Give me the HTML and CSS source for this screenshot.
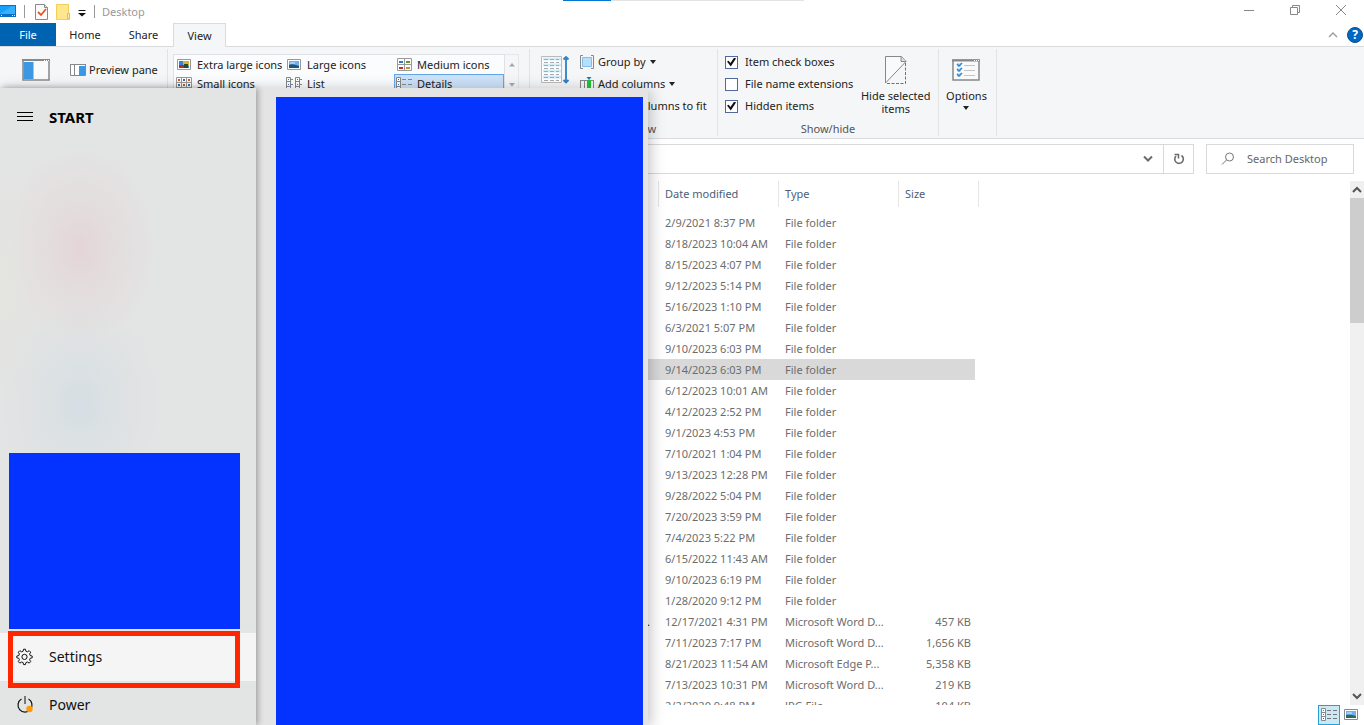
FILE: index.html
```html
<!DOCTYPE html>
<html lang="en">
<head>
<meta charset="utf-8">
<title>Desktop</title>
<link rel="stylesheet" href="styles.css">
</head>
<body>
<div class="window">
  <header class="titlebar">
    <div class="quick">
      <svg width="16" height="23" viewBox="0 0 16 23"><rect y="5" width="16" height="12" fill="#0a6fc2"/><path d="M0 6h15v8H0z" fill="#16a0fb"/><path d="M0 14 12 6h3v8z" fill="#35b0ff"/><path d="M1 15.500h1M12 15.500h1M14 15.500h1" stroke="#fff"/></svg>
      <i class="bar"></i>
      <svg width="13" height="23" viewBox="0 0 13 23"><path d="M.5 4.500h9l3 3v12H.5z" fill="#fafafa" stroke="#8a8a8a"/><path d="M9.500 4.500v3h3" fill="#ddd" stroke="#8a8a8a"/><path d="m3 12 3 3 5-6" fill="none" stroke="#e8551c" stroke-width="1.800"/></svg>
      <svg width="14" height="23" viewBox="0 0 14 23"><path d="M.5 4.500h12v9h1v6H.5z" fill="#ffe68f" stroke="#f4cf57"/><path d="M11.500 13.500h2v5h-2z" fill="#fff0b5" stroke="#e7bd41"/></svg>
      <svg width="8" height="23" viewBox="0 0 8 23"><path d="M.5 10.500h7" stroke="#111"/><path d="M0 13h8L4 16.500z" fill="#111"/></svg>
      <i class="bar"></i>
      <span class="title">Desktop</span>
    </div>
    <div class="progress"><i></i></div>
    <div class="caption">
      <button aria-label="Minimize"><svg width="12" height="12"><path d="M1 6.500h10" stroke="#888"/></svg></button>
      <button aria-label="Restore"><svg width="12" height="12"><path d="M1.500 3.500h7v7h-7zM3.500 3V1.500h7v7H9" fill="none" stroke="#888"/></svg></button>
      <button aria-label="Close"><svg width="12" height="12"><path d="m1 1 10 10M11 1 1 11" stroke="#888"/></svg></button>
    </div>
  </header>

  <nav class="tabs">
    <button class="tab file">File</button>
    <button class="tab home">Home</button>
    <button class="tab share">Share</button>
    <button class="tab view">View</button>
    <div class="tabs-end">
      <svg width="10" height="8"><path d="m1 6 4-4 4 4" fill="none" stroke="#999" stroke-width="1.300"/></svg>
      <button class="help" aria-label="Help">?</button>
    </div>
  </nav>

  <section class="ribbon">
    <div class="group panes">
      <svg width="28" height="22" viewBox="0 0 28 22"><path d="M1 1h26v20H1z" fill="#fafafa" stroke="#888" stroke-width="1.500"/><path d="M1.500 3h10v17h-10z" fill="#3d98e3"/><path d="M0 1h28" stroke="#888" stroke-width="2"/><path d="M22 1.500h1M24 1.500h1M26 1.500h1" stroke="#fff"/></svg>
      <button class="cmd"><svg width="16" height="12" viewBox="0 0 16 12"><path d="M.5.500h15v11H.5zM4.500 1v10" fill="#fff" stroke="#888"/><path d="M9 2h6v9H9z" fill="#3d98e3"/><path d="M0 .5h16" stroke="#888"/></svg>Preview pane</button>
    </div>
    <div class="group layout">
      <div class="gallery">
        <button><svg width="16" height="14" viewBox="0 0 16 14"><path d="M1.500 1.500h13v10h-13z" fill="#fff" stroke="#999"/><path d="M3 3h10v7H3z" fill="#3f7fd2"/><path d="M7 3h6v5H7z" fill="#d4b72b"/><path d="M3 7h5v3H3z" fill="#a6362b"/><path d="M8 6h4v4H8z" fill="#284a2a"/></svg>Extra large icons</button>
        <button><svg width="16" height="14" viewBox="0 0 16 14"><path d="M1.500 1.500h13v10h-13z" fill="#fff" stroke="#999"/><path d="M3 3h10v7H3z" fill="#70aef0"/><path d="M3 7q3-2 10 1v2H3z" fill="#1d5775"/><path d="M4 5h5" stroke="#d9ecff"/></svg>Large icons</button>
        <button><svg width="16" height="14" viewBox="0 0 16 14"><path d="M1.500.500h14v12h-14zM8.500.500v12M1.500 6.500h14" fill="#fff" stroke="#999"/><path d="M3 3h4v2H3z" fill="#3879b9"/><path d="M10 3h4v2h-4z" fill="#668e34"/><path d="M3 9h4v2H3z" fill="#c43122"/><path d="M10 9h4v2h-4z" fill="#b99b28"/></svg>Medium icons</button>
        <button><svg width="16" height="14" viewBox="0 0 16 14"><path d="M.5.500h15v13H.5zM5.500.500v13M10.500.500v13M0 5.500h16M0 10.500h16" fill="#fff" stroke="#999"/><path d="M2 3h2M12 3h2M7 8h2" stroke="#c45a28" stroke-width="2"/><path d="M7 3h2M2 8h2M12 8h2" stroke="#3679a0" stroke-width="2"/></svg>Small icons</button>
        <button><svg width="16" height="14" viewBox="0 0 16 14"><path d="M.5.500h4v13h-4zM9.500.500h4v13h-4zM.5 4.500h4M.5 9.500h4M9.500 4.500h4M9.500 9.500h4M5 2.500h2M5 7.500h2M5 11.500h2M14 2.500h2M14 7.500h2M14 11.500h2" fill="#fff" stroke="#888"/><path d="M2 2.500h1M11 2.500h1" stroke="#26a04c"/><path d="M2 7.500h1M11 7.500h1" stroke="#3478e8"/><path d="M2 11.500h1M11 11.500h1" stroke="#d22"/></svg>List</button>
        <button class="chosen"><svg width="16" height="14" viewBox="0 0 16 14"><path d="M.5.500h4v13h-4zM.5 4.500h4M.5 9.500h4M6 2.500h4M12 2.500h4M6 7.500h4M12 7.500h4M6 11.500h4M12 11.500h4" fill="#fff" stroke="#888"/><path d="M2 2.500h1" stroke="#26a04c"/><path d="M2 7.500h1" stroke="#3478e8"/><path d="M2 11.500h1" stroke="#d22"/></svg>Details</button>
      </div>
      <div class="gallery-scroll"><svg width="6" height="4"><path d="M0 3.500 3 0l3 3.500z" fill="#a4a8ad"/></svg><svg width="6" height="4"><path d="M0 0h6L3 3.500z" fill="#a4a8ad"/></svg></div>
    </div>
    <div class="group current">
      <div class="group-body">
        <svg class="sort" width="29" height="28" viewBox="0 0 29 28"><path d="M.5.500h20v26H.5z" fill="#fff" stroke="#bbb"/><path d="M2 3h18M2 9h18M2 15h18M2 21h18" stroke="#d3ebf6" stroke-width="3"/><path d="M3 3.500h15M3 6.500h15M3 9.500h15M3 12.500h15M3 15.500h15M3 18.500h15M3 21.500h15M3 24.500h15" stroke="#aaa" stroke-dasharray="4 2"/><path d="M25 2v24M22.500 3.500 25 1l2.500 2.500M22.500 24l2.500 2.500 2.500-2.500" fill="none" stroke="#2f7fc4" stroke-width="1.800"/></svg>
        <div class="stack">
          <button class="cmd"><svg width="14" height="14" viewBox="0 0 14 14"><path d="M3 .5H.5v13H3M11 .5h2.500v13H11" fill="none" stroke="#888"/><path d="M2.500 2.500h9v9h-9z" fill="#b4e0fd" stroke="#84bfe8"/></svg>Group by<b class="caret"></b></button>
          <button class="cmd"><svg width="14" height="14" viewBox="0 0 14 14"><path d="M0 3.500h14M.5 3v11M4.500 3v11M13.500 3v11" stroke="#888"/><path d="M7 3h4v11H7z" fill="#24c336"/><path d="M6.500 0h5L9 3z" fill="#1678c8"/></svg>Add columns<b class="caret"></b></button>
          <button class="cmd"><svg width="14" height="14"></svg>Size all columns to fit</button>
        </div>
      </div>
      <div class="caption-text">Current view</div>
    </div>
    <div class="group showhide">
      <div class="group-body">
        <div class="stack">
          <label><input type="checkbox" checked>Item check boxes</label>
          <label><input type="checkbox">File name extensions</label>
          <label><input type="checkbox" checked>Hidden items</label>
        </div>
        <button class="big"><svg width="24" height="30" viewBox="0 0 24 30"><path d="M1.500 28V1.500h16l4.500 5L1.500 28" fill="#fafafa" stroke="#888"/><path d="M17 1.500v5h5" fill="#ddd" stroke="#888"/><path d="M21.500 8v20.500H2" fill="none" stroke="#1d86df" stroke-dasharray="3 1.500"/></svg><span>Hide selected<br>items</span></button>
      </div>
      <div class="caption-text">Show/hide</div>
    </div>
    <div class="group options">
      <button class="big"><svg width="28" height="30" viewBox="0 0 28 30"><path d="M1 5h26v20H1z" fill="#fafafa" stroke="#888" stroke-width="1.500"/><path d="M0 5.500h28" stroke="#888" stroke-width="2"/><path d="M22 5.500h1M24 5.500h1M26 5.500h1" stroke="#fff"/><path d="M5 8h4v4H5zM5 13h4v4H5zM5 18h4v4H5z" fill="#cde3f4"/><path d="m5 9 2 2 3-3M5 14l2 2 3-3M5 19l2 2 3-3" fill="none" stroke="#2586d5" stroke-width="1.500"/><path d="M12 10.500h11M12 15.500h11M12 20.500h11" stroke="#c4c4c4"/></svg><span>Options</span><b class="caret"></b></button>
    </div>
  </section>

  <section class="address">
    <div class="path">
      <button aria-label="Previous locations"><svg width="10" height="8"><path d="m1 1.500 4 4 4-4" fill="none" stroke="#6b6b6b" stroke-width="2"/></svg></button>
      <button class="refresh" aria-label="Refresh"><svg width="12" height="12" viewBox="0 0 12 12"><path d="M8.500 2.500A4.300 4.300 0 1 1 3 3" fill="none" stroke="#6b6b6b" stroke-width="1.600"/><path d="M1.500 1.500h4v4" fill="none" stroke="#6b6b6b" stroke-width="1.500"/></svg></button>
    </div>
    <label class="search"><svg width="14" height="14" viewBox="0 0 14 14"><circle cx="8.500" cy="5" r="4" fill="none" stroke="#777"/><path d="M5.500 8 1 12.500" stroke="#777"/></svg><input type="text" placeholder="Search Desktop" aria-label="Search Desktop"></label>
  </section>

  <main class="content">
    <div class="list">
      <table>
        <colgroup><col class="c-name"><col class="c-date"><col class="c-type"><col class="c-size"></colgroup>
        <thead><tr><th></th><th>Date modified</th><th>Type</th><th>Size</th></tr></thead>
        <tbody>
          <tr><td></td><td>2/9/2021 8:37 PM</td><td>File folder</td><td></td></tr>
          <tr><td></td><td>8/18/2023 10:04 AM</td><td>File folder</td><td></td></tr>
          <tr><td></td><td>8/15/2023 4:07 PM</td><td>File folder</td><td></td></tr>
          <tr><td></td><td>9/12/2023 5:14 PM</td><td>File folder</td><td></td></tr>
          <tr><td></td><td>5/16/2023 1:10 PM</td><td>File folder</td><td></td></tr>
          <tr><td></td><td>6/3/2021 5:07 PM</td><td>File folder</td><td></td></tr>
          <tr><td></td><td>9/10/2023 6:03 PM</td><td>File folder</td><td></td></tr>
          <tr class="selected"><td></td><td>9/14/2023 6:03 PM</td><td>File folder</td><td></td></tr>
          <tr><td></td><td>6/12/2023 10:01 AM</td><td>File folder</td><td></td></tr>
          <tr><td></td><td>4/12/2023 2:52 PM</td><td>File folder</td><td></td></tr>
          <tr><td></td><td>9/1/2023 4:53 PM</td><td>File folder</td><td></td></tr>
          <tr><td></td><td>7/10/2021 1:04 PM</td><td>File folder</td><td></td></tr>
          <tr><td></td><td>9/13/2023 12:28 PM</td><td>File folder</td><td></td></tr>
          <tr><td></td><td>9/28/2022 5:04 PM</td><td>File folder</td><td></td></tr>
          <tr><td></td><td>7/20/2023 3:59 PM</td><td>File folder</td><td></td></tr>
          <tr><td></td><td>7/4/2023 5:22 PM</td><td>File folder</td><td></td></tr>
          <tr><td></td><td>6/15/2022 11:43 AM</td><td>File folder</td><td></td></tr>
          <tr><td></td><td>9/10/2023 6:19 PM</td><td>File folder</td><td></td></tr>
          <tr><td></td><td>1/28/2020 9:12 PM</td><td>File folder</td><td></td></tr>
          <tr><td>.</td><td>12/17/2021 4:31 PM</td><td>Microsoft Word D...</td><td>457 KB</td></tr>
          <tr><td></td><td>7/11/2023 7:17 PM</td><td>Microsoft Word D...</td><td>1,656 KB</td></tr>
          <tr><td></td><td>8/21/2023 11:54 AM</td><td>Microsoft Edge P...</td><td>5,358 KB</td></tr>
          <tr><td></td><td>7/13/2023 10:31 PM</td><td>Microsoft Word D...</td><td>219 KB</td></tr>
          <tr><td></td><td>2/2/2020 9:48 PM</td><td>JPG File</td><td>104 KB</td></tr>
        </tbody>
      </table>
    </div>
    <div class="scrollbar">
      <svg width="10" height="8"><path d="m1 6 4-4 4 4" fill="none" stroke="#555" stroke-width="2"/></svg>
      <i class="thumb"></i>
      <svg class="down" width="10" height="8"><path d="m1 2 4 4 4-4" fill="none" stroke="#555" stroke-width="2"/></svg>
    </div>
  </main>

  <footer class="status">
    <button class="on" aria-label="Details view"><svg width="16" height="14" viewBox="0 0 16 14"><path d="M.5.500h4v12h-4zM.5 4.500h4M.5 8.500h4" fill="#fff" stroke="#888"/><path d="M6 2.500h4M12 2.500h4M6 6.500h4M12 6.500h4M6 10.500h4M12 10.500h4" stroke="#777"/><path d="M2 2.500h1" stroke="#26a04c"/><path d="M2 6.500h1" stroke="#3478e8"/><path d="M2 10.500h1" stroke="#d22"/></svg></button>
    <button aria-label="Thumbnail view"><svg width="14" height="12" viewBox="0 0 14 12"><path d="M.5.500h13v10H.5z" fill="#fff" stroke="#888"/><path d="M2 2h10v7H2z" fill="#70aef0"/><path d="M2 6q4-1 10 1v2H2z" fill="#2d6a58"/><path d="M3 4h5" stroke="#d9ecff"/></svg></button>
  </footer>
</div>

<aside class="start">
  <div class="rail">
    <div class="rail-item head"><svg width="16" height="16"><path d="M0 3.500h16M0 7.500h16M0 11.500h16" stroke="#000"/></svg>START</div>
    <div class="cover small"></div>
    <button class="rail-item settings"><svg width="18" height="18" viewBox="0 0 18 18"><path d="M7.600 1.200h1.800l.5 2 1.500.6L13.200 2.700l1.500 1.500-1.100 1.800.6 1.500 2 .5v1.800l-2 .5-.6 1.500 1.100 1.800-1.500 1.500-1.800-1.100-1.500.6-.5 2H7.600l-.5-2-1.500-.6-1.800 1.100-1.500-1.500 1.100-1.800-.6-1.500-2-.5V8l2-.5.6-1.500-1.100-1.800 1.500-1.500 1.800 1.100 1.500-.6z" fill="none" stroke="#111"/><circle r="2.600" cx="8.500" cy="8.900" fill="none" stroke="#111"/></svg>Settings</button>
    <button class="rail-item power"><svg width="18" height="18" viewBox="0 0 18 18"><path d="M5.500 3A7 7 0 1 0 12.500 3" fill="none" stroke="#111" stroke-width="1.200"/><path d="M9 0v8" stroke="#555" stroke-width="1.500"/><circle cx="13.500" cy="13" r="3.200" fill="#ff9a00"/></svg>Power</button>
  </div>
  <div class="tiles"><div class="cover"></div></div>
</aside>
<div class="highlight"></div>
</body>
</html>
```
FILE: styles.css
```css
* { box-sizing: border-box; }
body { margin: 0; height: 100vh; overflow: hidden; position: relative; background: #fff; color: #222; font: 11px/16px "Noto Sans", "Open Sans", sans-serif; }
button, input { font: inherit; color: inherit; }
button { border: 0; padding: 0; background: none; }
svg { display: block; flex: none; }

.window { height: 100%; display: flex; flex-direction: column; }

.titlebar { height: 23px; flex: none; display: flex; justify-content: space-between; position: relative; }
.quick { display: flex; align-items: center; gap: 8px; }
.quick .bar { width: 1px; height: 13px; background: #999; }
.quick .bar + svg { margin-left: 2px; }
.quick .bar + .title { color: #999; margin-left: -1px; }
.progress { position: absolute; top: 0; left: 563px; width: 241px; height: 1px; background: #e3e3e3; }
.progress i { display: block; width: 48px; height: 1px; background: #0078d4; }
.caption { display: flex; }
.caption button { width: 46px; display: flex; justify-content: center; padding-top: 4px; }

.tabs { height: 24px; flex: none; display: flex; border-bottom: 1px solid #dadbdc; }
.tab { height: 24px; text-align: center; }
.file { width: 56px; height: 23px; background: #0063b1; color: #fff; }
.home { width: 58px; }
.share { width: 59px; }
.view { width: 53px; background: #f5f6f7; border: 1px solid #dadbdc; border-bottom: 0; }
.tabs-end { margin-left: auto; display: flex; align-items: center; gap: 9px; }
.help { width: 16px; height: 16px; margin-right: 1px; border: 1px solid #0b4f8f; border-radius: 50%; background: #0067c5; color: #fff; font-weight: bold; font-size: 12px; line-height: 14px; }

.ribbon { height: 92px; flex: none; display: flex; background: #f5f6f7; border-bottom: 1px solid #dadbdc; padding: 2px 0; }
.group { border-right: 1px solid #e2e3e4; height: 87px; flex: none; }
.cmd { display: flex; align-items: center; white-space: nowrap; height: 22px; gap: 4px; }
.panes { width: 168px; display: flex; align-items: flex-start; gap: 20px; padding: 10px 0 0 22px; }
.panes .cmd { gap: 3px; }
.layout { width: 362px; display: flex; align-items: flex-start; padding: 5px 10px 0 5px; }
.gallery { flex: 1; display: grid; grid-template-columns: 110px 110px 110px; grid-template-rows: 19px 20px; background: #fbfcfd; border: 1px solid #dfe1e4; height: 60px; overflow: hidden; }
.gallery button { display: flex; align-items: center; gap: 5px; padding-left: 1px; padding-bottom: 1px; white-space: nowrap; border: 1px solid transparent; height: 20px; }
.gallery .chosen { background: #cce2f9; border-color: #65a6e8; }
.gallery-scroll { width: 14px; height: 60px; border: 1px solid #e6e7e9; border-left: 0; display: flex; flex-direction: column; align-items: center; gap: 16px; padding-top: 8px; }
.current { width: 188px; }
.group-body { display: flex; height: 72px; }
.stack { display: flex; flex-direction: column; padding-top: 2px; }
.sort { margin: 7px 10px 0 11px; }
.caret { border: 3px solid transparent; border-top: 4px solid #222; border-bottom: 0; }
.caption-text { text-align: center; line-height: 16px; color: #555; }
.showhide { width: 221px; }
.showhide label { display: flex; align-items: center; gap: 7px; height: 22px; white-space: nowrap; padding-left: 7px; }
.showhide input { appearance: none; width: 13px; height: 13px; margin: 0; border: 1px solid #52699a; background: #fff; display: grid; place-items: center; }
.showhide input:checked::before { content: ""; width: 9px; height: 9px; background: #111; clip-path: polygon(0 45%, 18% 35%, 38% 62%, 80% 0, 100% 12%, 42% 100%); }
.showhide .group-body { justify-content: space-between; }
.big { display: flex; flex-direction: column; align-items: center; line-height: 13px; padding-top: 6px; gap: 4px; }
.showhide .big { width: 86px; white-space: nowrap; }
.options { width: 58px; display: flex; justify-content: center; align-items: flex-start; padding-right: 2px; }

.address { flex: none; display: flex; gap: 12px; padding: 5px 10px 6px 0; }
.path { flex: 1; height: 30px; border: 1px solid #d9d9d9; display: flex; justify-content: flex-end; }
.path button { width: 30px; display: flex; align-items: center; justify-content: center; }
.path .refresh { border-left: 1px solid #d9d9d9; }
.search { width: 148px; height: 30px; border: 1px solid #d9d9d9; display: flex; align-items: center; gap: 12px; padding-left: 14px; color: #666; }
.search input { border: 0; padding: 0; width: 100px; outline: 0; background: none; }
.search input::placeholder { color: #666; opacity: 1; }

.content { flex: 1; min-height: 0; display: flex; padding-top: 1px; }
.list { flex: 1; overflow: hidden; }
table { table-layout: fixed; width: 979px; border-collapse: separate; border-spacing: 0; color: #6d6d6d; }
.c-name { width: 659px; }
.c-date, .c-type { width: 120px; }
.c-size { width: 80px; }
th { height: 26px; padding: 0 0 0 6px; text-align: left; font-weight: normal; color: #4c607a; border-right: 1px solid #e5e5e5; }
thead::after { content: ""; display: block; height: 5px; }
td { height: 21px; padding: 0 0 0 6px; white-space: nowrap; line-height: 16px; }
td:first-child { text-align: right; padding-right: 9px; color: #400; }
td:last-child { text-align: right; padding-right: 8px; }
.selected { background: linear-gradient(#d9d9d9, #d9d9d9) no-repeat 0 0 / 975px 100%; }
.scrollbar { width: 14px; background: #f0f0f0; display: flex; flex-direction: column; align-items: center; padding: 5px 0; }
.thumb { width: 14px; height: 125px; margin-top: 4px; background: #cdcdcd; }
.down { margin-top: auto; }
.status { height: 20px; flex: none; display: flex; justify-content: flex-end; }
.status button { width: 22px; height: 20px; display: flex; align-items: center; justify-content: center; }
.status button:last-child { width: 24px; padding-right: 2px; }
.status .on { border: 1px solid #26a0da; background: #cbe8f6; }

.start { position: absolute; left: 0; top: 88px; bottom: 0; width: 648px; background: #e4e4e4; display: flex; box-shadow: 2px 2px 14px rgba(0, 0, 0, .25); }
.rail { width: 256px; display: flex; flex-direction: column; box-shadow: 2px 0 6px rgba(0, 0, 0, .3); background: radial-gradient(ellipse 75px 100px at 80px 160px, #e4d5d6, #e4d5d680 40%, #e4d5d600), radial-gradient(ellipse 80px 100px at 80px 315px, #d5dee3, #d5dee380 40%, #d5dee300), radial-gradient(ellipse 60px 120px at 0 200px, #e4e5df, #e4e5df00), #e3e4e4; }
.rail-item { height: 48px; flex: none; display: flex; align-items: center; gap: 15px; padding-left: 16px; font-size: 14px; line-height: 20px; color: #111; }
.head { height: 57px; margin-bottom: auto; gap: 16px; padding-left: 17px; font-size: 15px; font-weight: bold; color: #000; }
.settings { background: #f5f5f5; }
.power { height: 44px; padding-top: 4px; }
.cover { background: #0433ff; height: 100%; }
.small { height: 176px; margin: 0 16px 4px 9px; flex: none; }
.tiles { flex: 1; padding: 9px 5px 0 20px; }
.highlight { position: absolute; left: 8px; bottom: 37px; width: 232px; height: 57px; border: 5px solid #ff2600; }
```
